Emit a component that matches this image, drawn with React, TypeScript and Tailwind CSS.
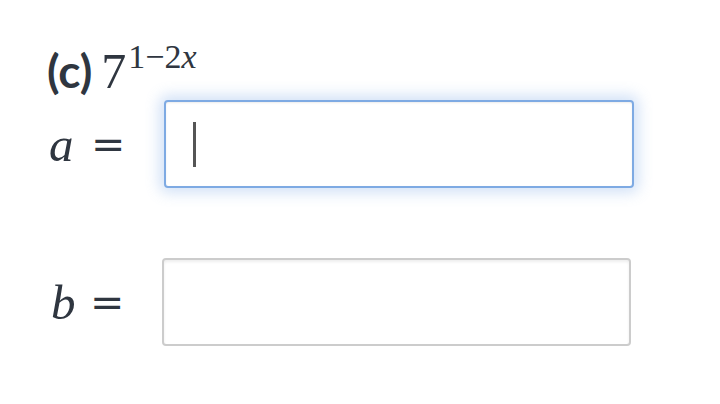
export default function App() {
  return (
    <div className="w-[720px] h-[404px] bg-white text-[#2f3640] pl-[47px] pt-[42px]">
      {/* Part heading */}
      <div className="flex items-baseline h-[54px]">
        <span className="font-['Lato',sans-serif] font-bold text-[46px] leading-none">(c)</span>
        <span className="ml-[9px] font-['Liberation_Serif',serif] text-[50px] leading-none">
          7
          <sup className="text-[34px] relative top-[-2px] ml-[2px] align-super leading-none">
            1−2<i>x</i>
          </sup>
        </span>
      </div>

      {/* a = */}
      <div className="flex items-center mt-[4px]">
        <div className="w-[117px] flex items-center">
          <i className="w-[44px] pl-[2px] font-['Liberation_Serif',serif] text-[49px] leading-none">a</i>
          <span className="font-['DejaVu_Serif',serif] text-[41px] leading-none">=</span>
        </div>
        <div className="w-[470px] h-[88px] rounded-[4px] border-2 border-[#7eaae3] bg-white shadow-[0_0_14px_5px_rgba(110,160,230,0.3),inset_0_1px_2px_rgba(0,0,0,0.08)] flex items-center pl-[27px]">
          <span className="w-[3px] h-[45px] bg-[#555555]" />
        </div>
      </div>

      {/* b = */}
      <div className="flex items-center mt-[70px]">
        <div className="w-[115px] flex items-center">
          <i className="w-[43px] pl-[4px] font-['Liberation_Serif',serif] text-[49px] leading-none">b</i>
          <span className="font-['DejaVu_Serif',serif] text-[41px] leading-none">=</span>
        </div>
        <div className="w-[469px] h-[88px] rounded-[4px] border-2 border-[#cccccc] bg-white shadow-[inset_0_2px_3px_rgba(0,0,0,0.07)]" />
      </div>
    </div>
  );
}
